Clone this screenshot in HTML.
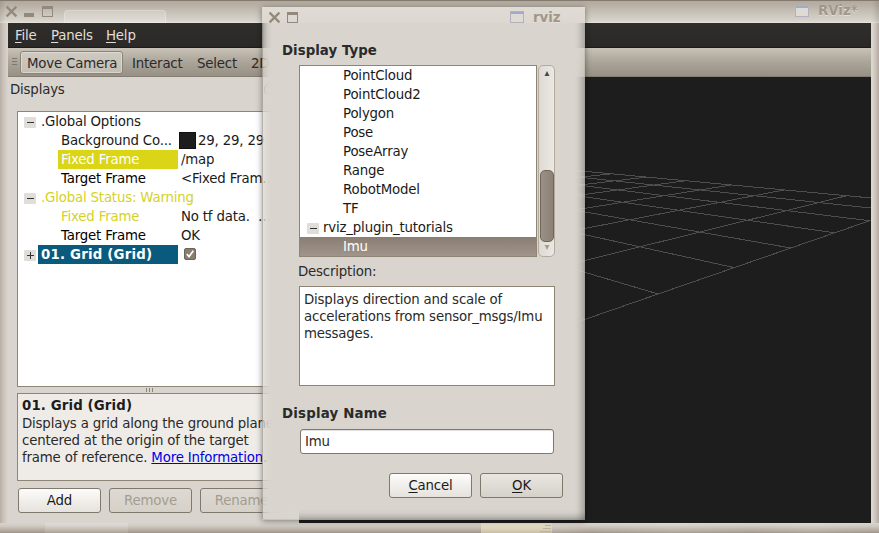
<!DOCTYPE html>
<html>
<head>
<meta charset="utf-8">
<title>RViz</title>
<style>
html,body{margin:0;padding:0;}
body{width:879px;height:533px;overflow:hidden;position:relative;background:#d9d5ce;
  font-family:"DejaVu Sans","Liberation Sans",sans-serif;font-size:13.33px;letter-spacing:-0.18px;line-height:19px;color:#1a1a1a;}
div,span,a{position:absolute;box-sizing:border-box;white-space:nowrap;}
svg{position:absolute;overflow:visible;}
u{text-decoration:underline;text-underline-offset:2px;text-decoration-thickness:1px;}

/* ===== main window frame ===== */
#mtitle{left:0;top:0;width:879px;height:23px;background:linear-gradient(#84796d 0px,#84796d 1px,#b3aa9f 1px,#b8b0a5 5px,#c3bcb2 10px,#cdc7be 15px,#d6d1c9 20px,#dcd8d0 21.5px,#e5e1da 22px,#e5e1da 23px);}
#mleft{left:0;top:23px;width:8px;height:510px;background:linear-gradient(90deg,#b6ada4 0px,#c3bbb3 2px,#cfc9c1 5px,#d8d4cc 8px);}
#mright{left:871px;top:23px;width:8px;height:510px;background:linear-gradient(90deg,#dedad3 0px,#d3cdc6 3px,#c2b9b0 6px,#b1a79e 8px);}
#mbottom{left:0;top:523px;width:879px;height:10px;background:linear-gradient(#d8d4cd 0px,#cfcac2 3px,#bdb5ab 6px,#a99f94 9px,#9a8f84 10px);}
.tbtn{stroke:#92897c;fill:none;}
.wtitle{font-weight:bold;font-size:13.33px;letter-spacing:0;color:#a29686;text-shadow:0 1px 0 #e3dfd8;line-height:16px;}

/* ===== menu / toolbar ===== */
#menubar{left:8px;top:23px;width:863px;height:25px;background:linear-gradient(#2f2e2b,#2a2927);border-bottom:1px solid #1c1b1a;}
#menubar span{color:#e2ded5;top:3px;line-height:19px;}
#toolbar{left:8px;top:48px;width:863px;height:29px;background:linear-gradient(#c8c2b8 0px,#bbb5aa 6px,#ada69b 13px,#a19a8f 21px,#979085 28px,#847d72 28px,#847d72 29px);}
#toolbar span{top:6px;color:#2a2a2a;}
#mvcam{left:12px;top:3px;width:103px;height:23px;border:1px solid #8a8377;border-radius:3px;background:linear-gradient(#cfcac1,#c3bdb3);box-shadow:inset 0 0 0 1px rgba(235,232,226,.55);}

/* ===== left displays panel ===== */
#ltree{left:17px;top:111px;width:267px;overflow:hidden;height:276px;background:#fff;border:1px solid #8f8576;}
#ltree span{line-height:19px;}
.exp{width:12px;height:11px;background:#e1ded9;border-radius:1px;}
.exp i{position:absolute;left:3px;top:5px;width:7px;height:1px;background:#333;}
.exp b{position:absolute;left:6px;top:2px;width:1px;height:7px;background:#333;}
#ldesc{left:17px;top:393px;width:267px;overflow:hidden;height:88px;background:#efece8;border:1px solid #8f8576;}
#ldesc span{line-height:17px;left:4px;}
.btn{height:25px;border:1px solid #7f786c;border-radius:3px;background:linear-gradient(#fdfcfb,#f1efeb 50%,#e6e3de);text-align:center;line-height:23px;color:#1a1a1a;}
.btn.dis{background:linear-gradient(#dedad3,#d5d1c9);color:#a39c91;border-color:#7f786d;}

/* ===== 3d view ===== */
#view{left:299px;top:77px;width:572px;height:446px;background:#1d1d1d;overflow:hidden;}

/* ===== dialog ===== */
#dshadow{left:263px;top:8px;width:321px;height:511px;box-shadow:0 1px 6px 1px rgba(0,0,0,0.42);}
#dlg{left:262px;top:7px;width:323px;height:513px;}
#dlgbg{left:0;top:0;width:323px;height:512.5px;background:#d9d5ce;
 -webkit-mask-image:linear-gradient(90deg,rgba(0,0,0,.62) 0,rgba(0,0,0,.82) 3px,rgba(0,0,0,.94) 6px,#000 10px,#000 313px,rgba(0,0,0,.95) 316px,rgba(0,0,0,.86) 319px,rgba(0,0,0,.72) 323px),linear-gradient(180deg,#000 0,#000 503px,rgba(0,0,0,.96) 506px,rgba(0,0,0,.88) 509px,rgba(0,0,0,.72) 512.5px);
 -webkit-mask-composite:source-in;mask-composite:intersect;}
#dlgtitle{left:0;top:0;width:323px;height:16px;background:linear-gradient(#e0dcd5,#dcd8d1);}
.lst{background:#fff;border:1px solid #8f8576;}
#dlist span{line-height:19px;}
</style>
</head>
<body>

<!-- main window frame -->
<div id="mtitle"></div>
<div id="mleft"></div>
<div id="mright"></div>
<div id="mbottom"></div>
<div style="left:45px;top:523px;width:83px;height:10px;background:linear-gradient(rgba(255,255,255,.18),rgba(255,255,255,.10));"></div>
<div style="left:481px;top:523px;width:71px;height:10px;background:linear-gradient(rgba(245,238,205,.62),rgba(238,230,190,.5));"></div>
<svg style="left:540px;top:524px" width="12" height="9"><path d="M5 1.5H11M3 4.5H11M0 7.5H11" stroke="#b9b3a4" stroke-width="1"/></svg>
<div style="left:552px;top:523px;width:319px;height:10px;background:linear-gradient(90deg,rgba(255,255,255,.12),rgba(255,255,255,0) 40px,rgba(255,255,255,.10) 120px,rgba(255,255,255,0) 200px,rgba(255,255,255,.10) 260px,rgba(255,255,255,0));"></div>

<div style="left:64px;top:10px;width:102px;height:13px;border-radius:4px 4px 0 0;background:rgba(255,255,255,.20);border:1px solid rgba(255,255,255,.22);border-bottom:none;"></div>
<div style="left:0;top:1px;width:6px;height:22px;background:linear-gradient(90deg,rgba(60,40,30,.13),rgba(60,40,30,0));"></div>
<div style="left:872px;top:1px;width:7px;height:22px;background:linear-gradient(90deg,rgba(60,40,30,0),rgba(60,40,30,.14));"></div>
<!-- main window title buttons -->
<svg style="left:0;top:0" width="60" height="23">
  <path class="tbtn" d="M6.6 6.6 L16.4 16.4 M16.4 6.6 L6.6 16.4" stroke-width="2.2"/>
  <rect x="24" y="13" width="10" height="4" fill="#92897c"/>
  <rect class="tbtn" x="42.5" y="6.5" width="10" height="10" stroke-width="1"/>
  <rect x="42" y="6" width="11" height="3" fill="#92897c"/>
</svg>
<svg style="left:795px;top:5px" width="14" height="12">
  <rect x="0.5" y="0.5" width="13" height="11" fill="#dedbd5" stroke="#b3b1bb" stroke-width="1"/>
  <rect x="1" y="1" width="12" height="2" fill="#a2aacb"/>
</svg>
<div class="wtitle" style="left:818px;top:3px;">RViz*</div>

<!-- menu bar -->
<div id="menubar">
  <span style="left:7px"><u>F</u>ile</span>
  <span style="left:43px"><u>P</u>anels</span>
  <span style="left:98px"><u>H</u>elp</span>
</div>

<!-- toolbar -->
<div id="toolbar">
  <svg style="left:4px;top:10px" width="6" height="10"><path d="M0 0.5H5M0 3.5H5M0 6.5H5" stroke="#7d766b" stroke-width="1"/></svg>
  <div id="mvcam"></div>
  <span style="left:19px">Move Camera</span>
  <span style="left:124px">Interact</span>
  <span style="left:189px">Select</span>
  <span style="left:243px">2D Nav Goal</span>
</div>

<!-- left panel -->
<div style="left:10px;top:80px;line-height:19px;color:#2a2a2a;">Displays</div>
<svg style="left:264px;top:83px" width="10" height="12"><rect x="0.5" y="2.5" width="8" height="8" rx="1.5" fill="none" stroke="#8f887c" stroke-width="1"/><rect x="2.5" y="0.5" width="4" height="4" rx="1" fill="#d9d5ce" stroke="#8f887c" stroke-width="1"/></svg>
<div id="ltree">
  <div class="exp" style="left:6px;top:5px"><i></i></div>
  <span style="left:23px;top:0">.Global Options</span>
  <span style="left:43px;top:19px">Background Co...</span>
  <div style="left:161px;top:20px;width:17px;height:17px;background:#1d1d1d;border:1px solid #111;"></div>
  <span style="left:180px;top:19px">29, 29, 29</span>
  <div style="left:40px;top:38px;width:120px;height:19px;background:#dad516;"></div>
  <span style="left:43px;top:38px;color:#fff">Fixed Frame</span>
  <span style="left:163px;top:38px">/map</span>
  <span style="left:43px;top:57px;color:#000">Target Frame</span>
  <span style="left:163px;top:57px">&lt;Fixed Fram…</span>
  <div class="exp" style="left:6px;top:81px"><i></i></div>
  <span style="left:23px;top:76px;color:#d5d127">.Global Status: Warning</span>
  <span style="left:43px;top:95px;color:#d5d127">Fixed Frame</span>
  <span style="left:163px;top:95px">No tf data.&nbsp; …</span>
  <span style="left:43px;top:114px;color:#000">Target Frame</span>
  <span style="left:163px;top:114px">OK</span>
  <div class="exp" style="left:6px;top:138px"><i></i><b></b></div>
  <div style="left:20px;top:133px;width:140px;height:19px;background:#0a5a7e;"></div>
  <span style="left:23px;top:133px;color:#fff;font-weight:bold;letter-spacing:0.2px">01. Grid (Grid)</span>
  <div style="left:166px;top:136px;width:12px;height:12px;background:#8a7d70;border:1px solid #6f6459;border-radius:2px;"></div>
  <svg style="left:166px;top:136px" width="12" height="12"><path d="M2.8 6 L5 8.6 L9.3 2.8" stroke="#fff" stroke-width="1.7" fill="none"/></svg>
</div>
<svg style="left:146px;top:388px" width="8" height="4"><path d="M0.5 0V4M3.5 0V4M6.5 0V4" stroke="#8a8378" stroke-width="1"/></svg>
<div id="ldesc">
  <span style="top:3px;font-weight:bold;color:#1c1c1c;letter-spacing:0.12px">01. Grid (Grid)</span>
  <span style="top:21px;color:#2a2a2a">Displays a grid along the ground plane,</span>
  <span style="top:38px;color:#2a2a2a">centered at the origin of the target</span>
  <span style="top:55px;color:#2a2a2a">frame of reference. <a style="position:static;color:#0000e6;text-decoration:underline">More Information</a>.</span>
</div>
<div class="btn" style="left:18px;top:488px;width:83px;">Add</div>
<div class="btn dis" style="left:109px;top:488px;width:83px;">Remove</div>
<div class="btn dis" style="left:200px;top:488px;width:83px;">Rename</div>

<!-- 3d view -->
<div id="view">
  <svg id="grid" style="left:0;top:0;overflow:hidden" width="572" height="446"><path d="M622.6 125.7L208.6 87.1M599.0 133.9L178.8 89.4M570.5 143.7L146.2 91.8M535.6 155.8L110.5 94.5M491.9 171.0L71.1 97.4M435.2 190.6L27.4 100.7M359.2 217.0L-21.3 104.4M251.8 254.2L-75.9 108.4M88.4 310.8L-137.6 113.1M-190.3 407.4L-207.7 118.3M-772.4 609.1L-288.3 124.4M622.6 125.7L-772.4 609.1M547.8 118.7L-554.9 391.3M485.3 112.9L-459.0 295.3M432.4 108.0L-405.0 241.2M386.8 103.7L-370.4 206.6M347.3 100.1L-346.3 182.5M312.7 96.8L-328.6 164.7M282.2 94.0L-315.0 151.1M254.9 91.4L-304.2 140.3M230.6 89.2L-295.5 131.6M208.6 87.1L-288.3 124.4" stroke="#4e4e4e" stroke-width="1" fill="none" shape-rendering="crispEdges"/></svg>
</div>

<!-- dialog -->
<div id="dshadow"></div>
<div id="dlg">
  <div id="dlgbg"></div>
  <div id="dlgtitle"></div>
  <div style="left:0;top:16px;width:1px;height:496px;background:rgba(110,100,90,.28);"></div>
  <svg style="left:0;top:0" width="60" height="20">
    <path class="tbtn" d="M7.6 5.6 L17.4 15.4 M17.4 5.6 L7.6 15.4" stroke-width="2.2"/>
    <rect class="tbtn" x="25.5" y="5.5" width="10" height="10" stroke-width="1"/>
    <rect x="25" y="5" width="11" height="3" fill="#92897c"/>
  </svg>
  <svg style="left:248px;top:4px" width="14" height="12">
    <rect x="0.5" y="0.5" width="13" height="11" fill="#dedbd5" stroke="#b3b1bb" stroke-width="1"/>
    <rect x="1" y="1" width="12" height="2" fill="#a2aacb"/>
  </svg>
  <div class="wtitle" style="left:271px;top:3px;">rviz</div>

  <div style="left:20px;top:34px;font-weight:bold;letter-spacing:0.04px;color:#2a2a2a;">Display Type</div>
  <div id="dlist" class="lst" style="left:37px;top:58px;width:238px;height:192px;">
    <span style="left:43px;top:0">PointCloud</span>
    <span style="left:43px;top:19px">PointCloud2</span>
    <span style="left:43px;top:38px">Polygon</span>
    <span style="left:43px;top:57px">Pose</span>
    <span style="left:43px;top:76px">PoseArray</span>
    <span style="left:43px;top:95px">Range</span>
    <span style="left:43px;top:114px">RobotModel</span>
    <span style="left:43px;top:133px">TF</span>
    <div class="exp" style="left:7px;top:157px"><i></i></div>
    <span style="left:23px;top:152px">rviz_plugin_tutorials</span>
    <div style="left:0;top:171px;width:236px;height:19px;background:linear-gradient(#8a7e73,#a1958b);"></div>
    <span style="left:43px;top:171px;color:#fff">Imu</span>
  </div>
  <!-- scrollbar -->
  <div style="left:276px;top:58px;width:17px;height:192px;border:1px solid #b3ab9e;border-radius:5px;background:linear-gradient(90deg,#dedad3,#ebe8e3);"></div>
  <div style="left:278px;top:163px;width:14px;height:72px;border:1px solid #6f675c;border-radius:5px;background:linear-gradient(90deg,#9a9083,#8b8174);"></div>
  <svg style="left:277px;top:58px" width="16" height="192">
    <path d="M5.5 11 L8 6 L10.5 11 Z" fill="#4a4a4a"/>
    <path d="M5.5 180 L8 185 L10.5 180 Z" fill="#a39c91"/>
  </svg>

  <div style="left:36px;top:255px;color:#2a2a2a;">Description:</div>
  <div class="lst" style="left:37px;top:279px;width:256px;height:100px;">
    <span style="left:4px;top:4px;line-height:17px;color:#2a2a2a">Displays direction and scale of</span>
    <span style="left:4px;top:21px;line-height:17px;color:#2a2a2a">accelerations from sensor_msgs/Imu</span>
    <span style="left:4px;top:38px;line-height:17px;color:#2a2a2a">messages.</span>
  </div>

  <div style="left:20px;top:397px;font-weight:bold;letter-spacing:0.2px;color:#2a2a2a;">Display Name</div>
  <div class="lst" style="left:38px;top:422px;width:254px;height:25px;border-radius:3px;border-color:#7f786c;box-shadow:inset 0 1px 1px rgba(0,0,0,.13);">
    <span style="left:4px;top:2px;color:#2a2a2a">Imu</span>
  </div>
  <div class="btn" style="left:127px;top:466px;width:83px;"><u>C</u>ancel</div>
  <div class="btn" style="left:218px;top:466px;width:83px;background:linear-gradient(#e9e6e1,#d6d2ca);"><u>O</u>K</div>
</div>

</body>
</html>
